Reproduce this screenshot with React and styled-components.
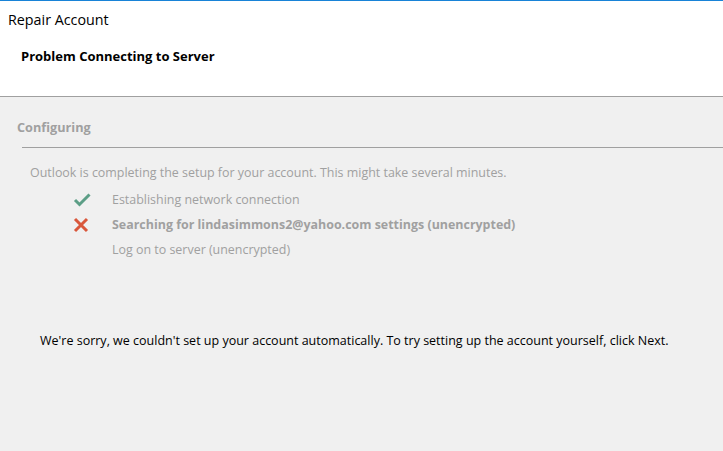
import styled, { createGlobalStyle } from "styled-components";

const GlobalStyle = createGlobalStyle`
  html, body {
    margin: 0;
    padding: 0;
    background: #f0f0f0;
  }
  body {
    font-family: "Open Sans", "Noto Sans", sans-serif;
  }
`;

const Window = styled.div`
  width: 723px;
  height: 451px;
  display: flex;
  flex-direction: column;
  background: #f0f0f0;
  border-top: 1px solid #1883d7;
  box-sizing: border-box;
  overflow: hidden;
`;

const Header = styled.div`
  height: 95px;
  background: #ffffff;
  border-bottom: 1px solid #a0a0a0;
  display: flex;
  flex-direction: column;
`;

const Title = styled.div`
  font-size: 14.3px;
  color: #000;
  padding: 9px 0 0 8px;
  line-height: 20px;
`;

const Heading = styled.div`
  font-size: 13px;
  font-weight: 700;
  color: #000;
  padding: 18px 0 0 21px;
  line-height: 16px;
`;

const Body = styled.div`
  flex: 1;
  display: flex;
  flex-direction: column;
`;

const Section = styled.div`
  font-size: 12.7px;
  font-weight: 700;
  color: #a0a0a0;
  padding: 22px 0 0 17px;
  line-height: 16px;
`;

const Rule = styled.div`
  margin: 12px 0 0 22px;
  height: 1px;
  background: #a0a0a0;
`;

const Intro = styled.div`
  font-size: 12.45px;
  color: #a0a0a0;
  padding: 17px 0 0 30px;
  line-height: 16px;
`;

const Steps = styled.ul`
  list-style: none;
  margin: 6px 0 0 0;
  padding: 0 0 0 73px;
  display: flex;
  flex-direction: column;
`;

const Step = styled.li`
  height: 25px;
  display: flex;
  align-items: center;
  font-size: 12.45px;
  color: #a0a0a0;
  font-weight: ${(p) => (p.$active ? 700 : 400)};
`;

const IconSlot = styled.span`
  width: 39px;
  display: flex;
  align-items: center;
`;

const Message = styled.div`
  font-size: 12.5px;
  color: #000;
  padding: 71px 0 0 40px;
  line-height: 16px;
`;

const Check = () => (
  <svg width="18" height="14" viewBox="0 0 18 14">
    <path d="M2 7 L6.5 11.5 L16.5 1.5" fill="none" stroke="#5c9e86" strokeWidth="3" />
  </svg>
);

const Cross = () => (
  <svg width="16" height="16" viewBox="0 0 16 16">
    <path d="M2 2 L14 14 M14 2 L2 14" fill="none" stroke="#d9573b" strokeWidth="3" />
  </svg>
);

const steps = [
  { text: "Establishing network connection", icon: <Check /> },
  {
    text: "Searching for lindasimmons2@yahoo.com settings (unencrypted)",
    icon: <Cross />,
    active: true,
  },
  { text: "Log on to server (unencrypted)", icon: null },
];

export default function App() {
  return (
    <>
      <GlobalStyle />
      <Window>
        <Header>
          <Title>Repair Account</Title>
          <Heading>Problem Connecting to Server</Heading>
        </Header>
        <Body>
          <Section>Configuring</Section>
          <Rule />
          <Intro>
            Outlook is completing the setup for your account. This might take
            several minutes.
          </Intro>
          <Steps>
            {steps.map((s) => (
              <Step key={s.text} $active={s.active}>
                <IconSlot>{s.icon}</IconSlot>
                {s.text}
              </Step>
            ))}
          </Steps>
          <Message>
            We're sorry, we couldn't set up your account automatically. To try
            setting up the account yourself, click Next.
          </Message>
        </Body>
      </Window>
    </>
  );
}
